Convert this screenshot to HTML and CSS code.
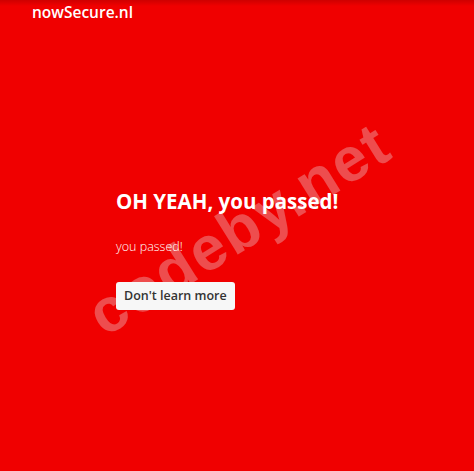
FILE: index.html
```html
<!DOCTYPE html>
<html lang="en">
<head>
<meta charset="utf-8">
<title>nowSecure.nl</title>
<link rel="stylesheet" href="styles.css">
</head>
<body>
<header class="topbar">
  <span class="brand">nowSecure.nl</span>
</header>
<main class="hero">
  <h1 class="hero-title">OH YEAH, you passed!</h1>
  <p class="hero-text">you passed!</p>
  <button class="hero-button" type="button">Don't learn more</button>
</main>
<div class="watermark" aria-hidden="true">codeby.net</div>
</body>
</html>
```
FILE: styles.css
```css
html, body {
  margin: 0;
  padding: 0;
  height: 100%;
}
body {
  background: #f00000;
  background-image: linear-gradient(#cf0000 0, #f00000 6px);
  background-repeat: no-repeat;
  font-family: "Open Sans", "DejaVu Sans", sans-serif;
  color: #fff;
  position: relative;
  overflow: hidden;
}
.topbar {
  position: relative;
  z-index: 2;
  padding: 2px 32px 0;
  height: 22px;
}
.brand {
  display: block;
  font-size: 15.5px;
  line-height: 20px;
  font-weight: 600;
  color: #fff;
}
.hero {
  position: relative;
  z-index: 2;
  display: flex;
  flex-direction: column;
  align-items: flex-start;
  padding: 165px 0 0 116px;
}
.hero-title {
  margin: 0;
  font-size: 20.5px;
  line-height: 25px;
  font-weight: 700;
  color: #fff;
}
.hero-text {
  margin: 24px 0 0;
  font-size: 12.5px;
  line-height: 18px;
  font-weight: 300;
  color: #fff;
}
.hero-button {
  margin-top: 26px;
  height: 28px;
  padding: 0 8px;
  border: 0;
  border-radius: 3px;
  background: #f7f7f7;
  color: #333;
  font-family: "Open Sans", "DejaVu Sans", sans-serif;
  font-size: 12.5px;
  font-weight: 600;
  line-height: 28px;
}
.watermark {
  position: absolute;
  z-index: 1;
  left: 239px;
  top: 229px;
  transform: translate(-50%, -50%) rotate(-32deg);
  font-family: "Liberation Sans", Arial, sans-serif;
  font-weight: 700;
  font-size: 62px;
  letter-spacing: 2px;
  line-height: 1;
  color: rgba(235, 225, 230, 0.34);
  white-space: nowrap;
}
```
